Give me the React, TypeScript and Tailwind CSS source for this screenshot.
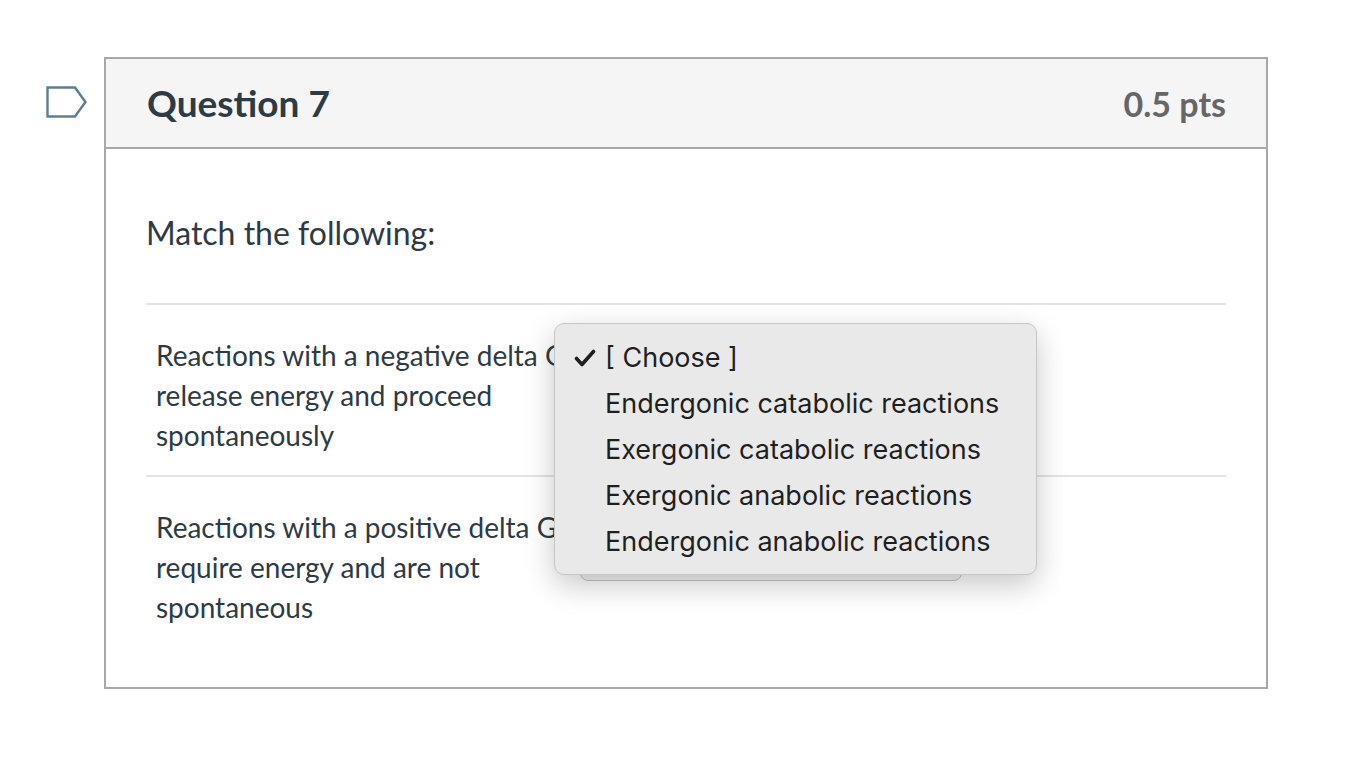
import React from "react";

const lato = { fontFamily: "Lato, 'Open Sans', sans-serif" };

function Row({ lines }: { lines: string }) {
  return (
    <div className="flex items-center border-t-2 border-[#e3e3e3] pl-[10px] pt-[30px] pb-[20px]">
      <div className="w-[410px] text-[28px] leading-[40px] text-[#2d3b45]">{lines}</div>
      <div className="ml-[14px] mb-[8px] h-[36px] w-[382px] rounded-[8px] border border-[#c4c4c4] bg-[#f4f4f4]" />
    </div>
  );
}

export default function App() {
  const items = [
    "Endergonic catabolic reactions",
    "Exergonic catabolic reactions",
    "Exergonic anabolic reactions",
    "Endergonic anabolic reactions",
  ];
  return (
    <div className="relative h-[766px] w-full bg-white" style={lato}>
      <div className="flex pl-[46px] pt-[57px]">
        <div className="mt-[29px] h-[32px] w-[41px] shrink-0">
          <svg width="41" height="32" viewBox="0 0 41 32">
            <path d="M1.5 1.5 H29 L39.5 16 L29 30.5 H1.5 Z" fill="white" stroke="#5d7d99" strokeWidth="2.4" strokeLinejoin="miter" />
          </svg>
        </div>
        <div className="ml-[17px] h-[632px] w-[1164px] border-2 border-[#a8a8a8] bg-white">
          <div className="flex h-[90px] items-center justify-between border-b-2 border-[#a8a8a8] bg-[#f5f5f5] pl-[41px] pr-[40px]">
            <div className="text-[37px] font-bold text-[#2d3b45]">Question 7</div>
            <div className="text-[34px] font-bold text-[#666666]">0.5 pts</div>
          </div>
          <div className="px-[40px]">
            <div className="pt-[64px] pb-[50px] text-[32px] leading-[40px] text-[#2d3b45]">Match the following:</div>
            <Row lines="Reactions with a negative delta G release energy and proceed spontaneously" />
            <Row lines="Reactions with a positive delta G require energy and are not spontaneous" />
          </div>
        </div>
      </div>

      <div
        className="absolute left-[554px] top-[323px] h-[252px] w-[483px] rounded-[10px] border border-[#c6c6c6] bg-[#e9e9e9] pt-[11px] shadow-[0_10px_30px_rgba(0,0,0,0.22)]"
        style={{ fontFamily: "Inter, 'Liberation Sans', sans-serif" }}
      >
        <div className="flex h-[46px] items-center text-[27px] text-[#1f1f1f]">
          <div className="flex w-[50px] justify-end pr-[9px]">
            <svg width="22" height="18" viewBox="0 0 22 18">
              <path d="M2.5 9.5 L8 15.5 L19.5 2.5" fill="none" stroke="#1f1f1f" strokeWidth="3.6" strokeLinecap="round" strokeLinejoin="round" />
            </svg>
          </div>
          <span>[ Choose ]</span>
        </div>
        {items.map((t) => (
          <div key={t} className="flex h-[46px] items-center pl-[50px] text-[27px] text-[#1f1f1f]">
            {t}
          </div>
        ))}
      </div>
    </div>
  );
}
